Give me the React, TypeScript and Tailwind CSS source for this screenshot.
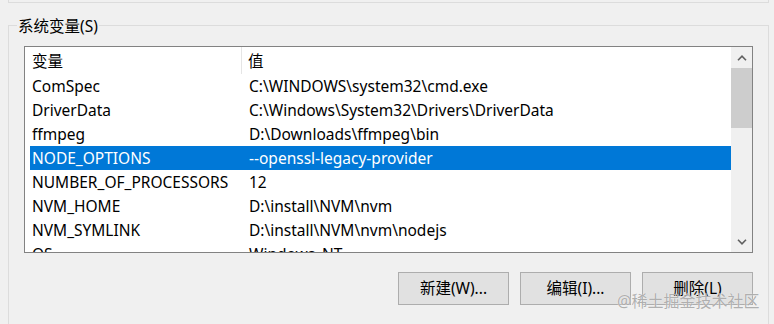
import React from "react";

const rows: [string, string][] = [
  ["ComSpec", "C:\\WINDOWS\\system32\\cmd.exe"],
  ["DriverData", "C:\\Windows\\System32\\Drivers\\DriverData"],
  ["ffmpeg", "D:\\Downloads\\ffmpeg\\bin"],
  ["NODE_OPTIONS", "--openssl-legacy-provider"],
  ["NUMBER_OF_PROCESSORS", "12"],
  ["NVM_HOME", "D:\\install\\NVM\\nvm"],
  ["NVM_SYMLINK", "D:\\install\\NVM\\nvm\\nodejs"],
  ["OS", "Windows_NT"],
];

const font = { fontFamily: '"Noto Sans", "Noto Sans CJK SC", sans-serif' };

export default function App() {
  return (
    <div
      className="relative w-[774px] h-[324px] overflow-hidden bg-[#f0f0f0] text-[15.5px] text-black"
      style={font}
    >
      {/* remnant of previous group box */}
      <div className="ml-[8px] w-[761px] h-[3px] border-b border-l border-r border-[#dcdcdc]" />

      {/* system variables group */}
      <div className="relative mt-[22px] ml-[8px] w-[761px] h-[400px] border-t border-l border-r border-[#dcdcdc]">
        <div className="absolute left-[8px] top-[-11px] px-[1px] bg-[#f0f0f0] leading-[22px]">
          系统变量(S)
        </div>

        {/* list view */}
        <div className="ml-[15px] mt-[20px] w-[729px] h-[207px] border border-[#828282] bg-white flex">
          <div className="flex-1 flex flex-col overflow-hidden">
            {/* header */}
            <div className="flex h-[27px] shrink-0 items-center">
              <div className="w-[217px] h-full flex items-center pl-[7px] pt-[3px] border-r border-[#e5e5e5]">
                变量
              </div>
              <div className="pl-[6px] pt-[3px]">值</div>
            </div>
            {rows.map(([k, v], i) => (
              <div
                key={k}
                className={
                  "flex h-[24px] shrink-0 items-center ml-[5px] pt-[2px] " +
                  (i === 3 ? "bg-[#0078d7] text-white" : "")
                }
              >
                <div className="w-[219px] pl-[2px] whitespace-nowrap">{k}</div>
                <div className="whitespace-nowrap">{v}</div>
              </div>
            ))}
          </div>

          {/* scrollbar */}
          <div className="w-[21px] shrink-0 bg-[#f0f0f0] flex flex-col">
            <div className="h-[21px] flex items-center justify-center">
              <svg width="10" height="6" viewBox="0 0 10 6">
                <path d="M1 5.2 L5 1.2 L9 5.2" fill="none" stroke="#606060" strokeWidth="1.6" />
              </svg>
            </div>
            <div className="h-[60px] bg-[#cdcdcd]" />
            <div className="flex-1" />
            <div className="h-[21px] flex items-center justify-center">
              <svg width="10" height="6" viewBox="0 0 10 6">
                <path d="M1 0.8 L5 4.8 L9 0.8" fill="none" stroke="#606060" strokeWidth="1.6" />
              </svg>
            </div>
          </div>
        </div>

        {/* buttons */}
        <div className="ml-[15px] mt-[19px] w-[729px] flex justify-end gap-[11px]">
          {["新建(W)...", "编辑(I)...", "删除(L)"].map((t) => (
            <div
              key={t}
              className="w-[111px] h-[33px] border border-[#adadad] bg-[#e1e1e1] flex items-center justify-center"
            >
              {t}
            </div>
          ))}
        </div>
      </div>

      {/* watermark */}
      <div
        className="absolute left-[617px] top-[289px] text-[16px] leading-[24px] text-[#9a9a9a]/80 whitespace-nowrap"
        style={{ textShadow: "0 0 1px #fff" }}
      >
        @稀土掘金技术社区
      </div>
    </div>
  );
}
